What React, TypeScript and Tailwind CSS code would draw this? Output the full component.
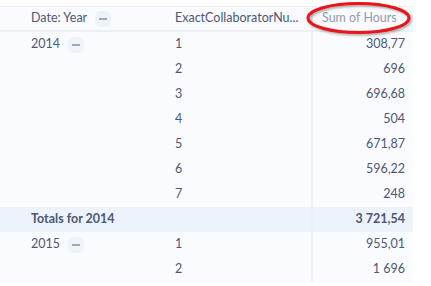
const rows = [
  { year: "2014", n: "1", v: "308,77" },
  { year: "", n: "2", v: "696" },
  { year: "", n: "3", v: "696,68" },
  { year: "", n: "4", v: "504" },
  { year: "", n: "5", v: "671,87" },
  { year: "", n: "6", v: "596,22" },
  { year: "", n: "7", v: "248" },
];

const Collapse = () => (
  <span className="ml-2 inline-flex h-4 w-4 items-center justify-center rounded-md bg-[#eef3fa]">
    <span className="block h-[2px] w-2 bg-[#a3a9b4]" />
  </span>
);

const Row = ({
  a,
  b,
  c,
  total,
}: {
  a: React.ReactNode;
  b: string;
  c: string;
  total?: boolean;
}) => (
  <div
    className={`grid h-[25px] grid-cols-[167px_144px_102px] items-center ${
      total ? "bg-[#edf3fa] font-bold" : ""
    }`}
  >
    <div className="flex items-center pl-[31px]">{a}</div>
    <div className="pl-2">{b}</div>
    <div className="flex h-full items-center justify-end border-l-2 border-[#eef0f3] pr-2">
      {c}
    </div>
  </div>
);

export default function App() {
  return (
    <div
      className="relative h-[286px] w-[431px] overflow-hidden bg-white pt-[6px] text-[12.5px] text-[#4c5773]"
      style={{ fontFamily: "Lato, 'Open Sans', sans-serif" }}
    >
      <div className="w-[413px] bg-[#fafbfe]">
        <div className="grid h-[26px] grid-cols-[167px_144px_102px] items-center border-t border-b-2 border-[#eeeff1]">
          <div className="flex items-center pl-[31px]">
            Date: Year
            <Collapse />
          </div>
          <div className="whitespace-nowrap pl-2">ExactCollaboratorNu...</div>
          <div className="flex h-full items-center border-l-2 border-[#eef0f3] pl-[9px] text-[#949aab]">
            Sum of Hours
          </div>
        </div>
        {rows.map((r, i) => (
          <Row
            key={i}
            a={
              r.year ? (
                <>
                  {r.year}
                  <Collapse />
                </>
              ) : (
                ""
              )
            }
            b={r.n}
            c={r.v}
          />
        ))}
        <Row a="Totals for 2014" b="" c="3 721,54" total />
        <Row
          a={
            <>
              2015
              <Collapse />
            </>
          }
          b="1"
          c="955,01"
        />
        <Row a="" b="2" c="1 696" />
      </div>
      <svg
        className="pointer-events-none absolute left-[303px] top-0"
        width="114"
        height="40"
        viewBox="0 0 114 40"
      >
        <defs>
          <filter id="sh" x="-10%" y="-30%" width="120%" height="160%">
            <feDropShadow dx="1.5" dy="1.5" stdDeviation="1.2" floodColor="#000" floodOpacity="0.35" />
          </filter>
        </defs>
        <ellipse
          cx="55.5"
          cy="18"
          rx="50.5"
          ry="14.5"
          fill="none"
          stroke="#e8141a"
          strokeWidth="3"
          filter="url(#sh)"
        />
      </svg>
    </div>
  );
}
